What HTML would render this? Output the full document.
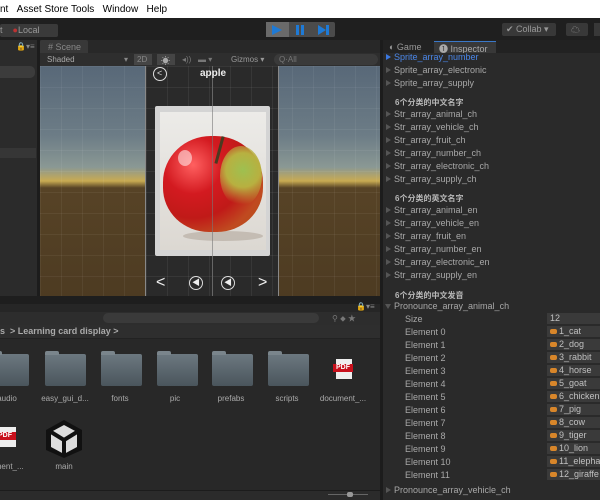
<!DOCTYPE html>
<html><head><meta charset="utf-8"><style>
*{margin:0;padding:0;box-sizing:border-box}
body{width:600px;height:500px;overflow:hidden;background:#282828;font-family:"Liberation Sans","Noto Sans CJK SC",sans-serif;position:relative;color:#bdbdbd}
.a{position:absolute}
.t{position:absolute;font-size:9px;white-space:nowrap}
.menu{left:0;top:0;width:600px;height:18px;background:#fff;color:#000;font-size:10px}
.ins .r{position:absolute;left:394px;font-size:9px;color:#a8a8a8;white-space:nowrap}
.ins .tri{position:absolute;left:386px;width:0;height:0;border-left:5px solid #555;border-top:3px solid transparent;border-bottom:3px solid transparent}
.ins .h{position:absolute;left:395px;font-size:8px;color:#b8b8b8;font-weight:bold}
.el{position:absolute;left:405px;font-size:9px;color:#a8a8a8}
.fld{position:absolute;left:547px;width:53px;height:11px;background:#3a3a3a;font-size:9px;color:#c0c0c0;padding-left:3px;line-height:11px;white-space:nowrap;overflow:hidden}
.fld i{display:inline-block;width:7px;height:5px;background:#d8862a;margin-right:2px;border-radius:2px}
.folder{position:absolute;width:41px;height:32px;background:linear-gradient(#6c7880,#4a555c);border-radius:2px}
.folder:before{content:"";position:absolute;left:0;top:-3px;width:14px;height:4px;background:#7a858c;border-radius:2px 2px 0 0}
.lab{position:absolute;font-size:8px;color:#aaa;text-align:center;width:60px}
</style></head><body>
<div class="a menu"><span class="t" style="left:0;top:4px;font-size:10px">nt&nbsp;&nbsp;&nbsp;Asset Store Tools&nbsp;&nbsp;&nbsp;Window&nbsp;&nbsp;&nbsp;Help</span></div>
<div class="a" style="left:0;top:18px;width:600px;height:22px;background:#1f1f1f"></div>
<div class="a" style="left:0;top:24px;width:58px;height:13px;background:#3a3a3a;border-radius:2px"></div>
<span class="t" style="left:0;top:25px;color:#999">t&nbsp;&nbsp;&nbsp;&nbsp;<span style="color:#b33">●</span>Local</span>
<div class="a" style="left:266px;top:22px;width:69px;height:15px;background:#4b4b4b;border-radius:2px"></div>
<div class="a" style="left:266px;top:22px;width:23px;height:15px;background:#6a6a6a"></div>
<div class="a" style="left:272px;top:25px;border-left:10px solid #1e7ad6;border-top:5px solid transparent;border-bottom:5px solid transparent"></div>
<div class="a" style="left:296px;top:25px;width:3px;height:10px;background:#1e7ad6"></div><div class="a" style="left:301px;top:25px;width:3px;height:10px;background:#1e7ad6"></div>
<div class="a" style="left:318px;top:25px;border-left:8px solid #1e7ad6;border-top:5px solid transparent;border-bottom:5px solid transparent"></div><div class="a" style="left:326px;top:25px;width:3px;height:10px;background:#1e7ad6"></div>
<div class="a" style="left:502px;top:23px;width:54px;height:13px;background:#383838;border-radius:2px"></div>
<span class="t" style="left:506px;top:24px;color:#999">✔ Collab ▾</span>
<div class="a" style="left:566px;top:23px;width:22px;height:13px;background:#383838;border-radius:2px"></div>
<span class="t" style="left:571px;top:23px;color:#999">☁</span>
<div class="a" style="left:594px;top:23px;width:6px;height:13px;background:#383838"></div>
<div class="a" style="left:0;top:40px;width:37px;height:256px;background:#2b2b2b"></div>
<div class="a" style="left:0;top:66px;width:35px;height:12px;background:#3c3c3c;border-radius:0 5px 5px 0"></div>
<div class="a" style="left:0;top:148px;width:36px;height:10px;background:#363636"></div>
<span class="t" style="left:16px;top:42px;color:#888;font-size:8px">🔒▾≡</span>
<div class="a" style="left:37px;top:40px;width:3px;height:256px;background:#1c1c1c"></div>
<div class="a" style="left:40px;top:40px;width:48px;height:13px;background:#383838;border-radius:2px 2px 0 0"></div>
<span class="t" style="left:48px;top:42px;color:#888"># Scene</span>
<div class="a" style="left:40px;top:53px;width:340px;height:13px;background:#2e2e2e"></div>
<span class="t" style="left:47px;top:55px;color:#aaa;font-size:8px">Shaded</span>
<span class="t" style="left:124px;top:55px;color:#888;font-size:8px">▾</span>
<div class="a" style="left:134px;top:54px;width:18px;height:11px;background:#454545"></div><span class="t" style="left:137px;top:55px;color:#888;font-size:8px">2D</span>
<div class="a" style="left:157px;top:54px;width:18px;height:11px;background:#454545"></div><span class="t" style="left:161px;top:54px;color:#aaa">☀</span>
<span class="t" style="left:182px;top:55px;color:#777;font-size:8px">◂))&nbsp;&nbsp;&nbsp;▬ ▾</span>
<span class="t" style="left:231px;top:55px;color:#999;font-size:8px">Gizmos ▾</span>
<div class="a" style="left:274px;top:54px;width:104px;height:11px;background:#3a3a3a;border-radius:6px"></div><span class="t" style="left:279px;top:55px;color:#777;font-size:8px">Q·All</span>
<div class="a" style="left:40px;top:66px;width:340px;height:230px;background:linear-gradient(#586878 0%,#6c7c86 30%,#8a9894 44%,#c8aa52 50%,#574326 53%,#4d3b22 100%)"></div>
<div class="a" style="left:40px;top:66px;width:340px;height:230px;background-image:linear-gradient(90deg,rgba(255,255,255,.05) 1px,transparent 1px),linear-gradient(rgba(255,255,255,.05) 1px,transparent 1px);background-size:21px 21px"></div>
<div class="a" style="left:145px;top:66px;width:134px;height:230px;background:#2a2a2a;border-left:1px solid #888;border-right:1px solid #888;background-image:linear-gradient(90deg,rgba(255,255,255,.06) 1px,transparent 1px),linear-gradient(rgba(255,255,255,.06) 1px,transparent 1px);background-size:21px 21px"></div>
<div class="a" style="left:212px;top:66px;width:1px;height:230px;background:#666"></div>
<div class="a" style="left:153px;top:67px;width:14px;height:14px;border:1.5px solid #ddd;border-radius:50%"></div><span class="t" style="left:157px;top:68px;color:#ddd;font-size:9px">&lt;</span>
<span class="t" style="left:200px;top:68px;color:#eee;font-weight:bold;font-size:10px">apple</span>
<div class="a" style="left:155px;top:106px;width:115px;height:150px;background:#d4d4d4;border-radius:2px"></div>
<div class="a" style="left:160px;top:112px;width:106px;height:138px;background:linear-gradient(#ecebe8,#dcd8d2)"></div>
<div class="a" style="left:183px;top:231px;width:80px;height:10px;background:rgba(120,100,80,.25);border-radius:50%"></div>
<div class="a" style="left:163px;top:136px;width:100px;height:96px;border-radius:48% 48% 46% 46%;background:radial-gradient(circle at 30% 30%,#ff6060 0%,#d31a20 30%,#c01a18 55%,#c04a20 75%,#b05018 100%)"></div>
<div class="a" style="left:220px;top:146px;width:42px;height:60px;border-radius:50%;background:radial-gradient(circle at 55% 40%,#9ec050 0%,#b8b040 40%,rgba(200,120,30,0) 80%)"></div>
<div class="a" style="left:178px;top:150px;width:14px;height:16px;border-radius:50%;background:rgba(255,230,230,.6)"></div>
<div class="a" style="left:218px;top:136px;width:3px;height:28px;background:#4a3a20;transform:rotate(15deg)"></div>
<div class="a" style="left:212px;top:106px;width:1px;height:150px;background:rgba(120,120,120,.6)"></div>
<span class="t" style="left:156px;top:274px;color:#eee;font-size:16px">&lt;</span>
<span class="t" style="left:258px;top:274px;color:#eee;font-size:16px">&gt;</span>
<div class="a" style="left:189px;top:276px;width:14px;height:14px;border:1.5px solid #ddd;border-radius:50%"></div><span class="t" style="left:192px;top:277px;color:#eee;font-size:8px">◀</span>
<div class="a" style="left:221px;top:276px;width:14px;height:14px;border:1.5px solid #ddd;border-radius:50%"></div><span class="t" style="left:224px;top:277px;color:#eee;font-size:8px">◀</span>
<div class="a" style="left:0;top:296px;width:380px;height:8px;background:#1e1e1e"></div>
<div class="a" style="left:0;top:304px;width:380px;height:8px;background:#262626"></div>
<span class="t" style="left:356px;top:302px;color:#888;font-size:8px">🔒▾≡</span>
<div class="a" style="left:0;top:312px;width:380px;height:13px;background:#2d2d2d"></div>
<div class="a" style="left:103px;top:313px;width:216px;height:10px;background:#3a3a3a;border-radius:5px"></div>
<span class="t" style="left:332px;top:313px;color:#777;font-size:8px">⚲ ⬥ ★</span>
<div class="a" style="left:0;top:325px;width:380px;height:14px;background:#2e2e2e;border-bottom:1px solid #222"></div>
<span class="t" style="left:0;top:326px;color:#aaa;font-weight:bold">s&nbsp;&nbsp;&gt;&nbsp;Learning card display&nbsp;&gt;</span>
<div class="a" style="left:0;top:340px;width:380px;height:150px;background:#282828"></div>
<div class="folder" style="left:-12px;top:354px"></div>
<div class="folder" style="left:45px;top:354px"></div>
<div class="folder" style="left:101px;top:354px"></div>
<div class="folder" style="left:157px;top:354px"></div>
<div class="folder" style="left:212px;top:354px"></div>
<div class="folder" style="left:268px;top:354px"></div>
<div class="a" style="left:336px;top:359px;width:16px;height:20px;background:#eee"></div><div class="a" style="left:333px;top:364px;width:20px;height:8px;background:#c8101c;color:#fff;font-size:7px;font-weight:bold;text-align:center;line-height:8px">PDF</div>
<div class="a" style="left:0;top:427px;width:16px;height:20px;background:#eee"></div><div class="a" style="left:-2px;top:432px;width:18px;height:8px;background:#c8101c;color:#fff;font-size:7px;font-weight:bold;line-height:8px">PDF</div>
<svg class="a" style="left:42px;top:418px" width="44" height="42" viewBox="0 0 44 42"><polygon points="22,2 40,12 40,32 22,40 4,32 4,12" fill="#111"/><polygon points="22,7 35,14 35,29 22,36 9,29 9,14" fill="#ddd"/><path d="M22 22 L22 36 M22 22 L9 14 M22 22 L35 14" stroke="#111" stroke-width="4"/></svg>
<div class="lab" style="left:-23px;top:394px">audio</div>
<div class="lab" style="left:35px;top:394px">easy_gui_d...</div>
<div class="lab" style="left:90px;top:394px">fonts</div>
<div class="lab" style="left:145px;top:394px">pic</div>
<div class="lab" style="left:201px;top:394px">prefabs</div>
<div class="lab" style="left:257px;top:394px">scripts</div>
<div class="lab" style="left:313px;top:394px">document_...</div>
<div class="lab" style="left:-23px;top:462px">ument_...</div>
<div class="lab" style="left:34px;top:462px">main</div>
<div class="a" style="left:0;top:490px;width:380px;height:10px;background:#2b2b2b;border-top:1px solid #1c1c1c"></div>
<div class="a" style="left:328px;top:494px;width:40px;height:1px;background:#666"></div><div class="a" style="left:347px;top:492px;width:6px;height:5px;background:#999;border-radius:2px"></div>
<div class="a" style="left:380px;top:40px;width:3px;height:460px;background:#1c1c1c"></div>
<div class="a" style="left:383px;top:40px;width:217px;height:13px;background:#222"></div>
<span class="t" style="left:389px;top:42px;color:#999">◐ Game</span>
<div class="a" style="left:434px;top:41px;width:62px;height:12px;background:#383838;border-top:1px solid #3a78c8"></div>
<span class="t" style="left:439px;top:42px;color:#aaa">❶ Inspector</span>
<div class="ins">
<div class="a" style="left:383px;top:53px;width:217px;height:447px;background:#2a2a2a"></div>
<div class="tri" style="top:54px;border-left-color:#3a78e0"></div><div class="r" style="top:52px;color:#4a86e8">Sprite_array_number</div>
<div class="tri" style="top:67px"></div><div class="r" style="top:65px">Sprite_array_electronic</div>
<div class="tri" style="top:80px"></div><div class="r" style="top:78px">Sprite_array_supply</div>
<div class="h" style="top:97px">6个分类的中文名字</div>
<div class="tri" style="top:111px"></div><div class="r" style="top:109px">Str_array_animal_ch</div>
<div class="tri" style="top:124px"></div><div class="r" style="top:122px">Str_array_vehicle_ch</div>
<div class="tri" style="top:137px"></div><div class="r" style="top:135px">Str_array_fruit_ch</div>
<div class="tri" style="top:150px"></div><div class="r" style="top:148px">Str_array_number_ch</div>
<div class="tri" style="top:163px"></div><div class="r" style="top:161px">Str_array_electronic_ch</div>
<div class="tri" style="top:176px"></div><div class="r" style="top:174px">Str_array_supply_ch</div>
<div class="h" style="top:193px">6个分类的英文名字</div>
<div class="tri" style="top:207px"></div><div class="r" style="top:205px">Str_array_animal_en</div>
<div class="tri" style="top:220px"></div><div class="r" style="top:218px">Str_array_vehicle_en</div>
<div class="tri" style="top:233px"></div><div class="r" style="top:231px">Str_array_fruit_en</div>
<div class="tri" style="top:246px"></div><div class="r" style="top:244px">Str_array_number_en</div>
<div class="tri" style="top:259px"></div><div class="r" style="top:257px">Str_array_electronic_en</div>
<div class="tri" style="top:272px"></div><div class="r" style="top:270px">Str_array_supply_en</div>
<div class="h" style="top:290px">6个分类的中文发音</div>
<div class="a" style="left:385px;top:304px;border-top:5px solid #555;border-left:3px solid transparent;border-right:3px solid transparent"></div><div class="r" style="top:301px">Pronounce_array_animal_ch</div>
<div class="el" style="top:314px">Size</div><div class="fld" style="top:313px">12</div>
<div class="el" style="top:327px">Element 0</div><div class="fld" style="top:326px"><i></i>1_cat</div>
<div class="el" style="top:340px">Element 1</div><div class="fld" style="top:339px"><i></i>2_dog</div>
<div class="el" style="top:353px">Element 2</div><div class="fld" style="top:352px"><i></i>3_rabbit</div>
<div class="el" style="top:366px">Element 3</div><div class="fld" style="top:365px"><i></i>4_horse</div>
<div class="el" style="top:379px">Element 4</div><div class="fld" style="top:378px"><i></i>5_goat</div>
<div class="el" style="top:392px">Element 5</div><div class="fld" style="top:391px"><i></i>6_chicken</div>
<div class="el" style="top:405px">Element 6</div><div class="fld" style="top:404px"><i></i>7_pig</div>
<div class="el" style="top:418px">Element 7</div><div class="fld" style="top:417px"><i></i>8_cow</div>
<div class="el" style="top:431px">Element 8</div><div class="fld" style="top:430px"><i></i>9_tiger</div>
<div class="el" style="top:444px">Element 9</div><div class="fld" style="top:443px"><i></i>10_lion</div>
<div class="el" style="top:457px">Element 10</div><div class="fld" style="top:456px"><i></i>11_elepha</div>
<div class="el" style="top:470px">Element 11</div><div class="fld" style="top:469px"><i></i>12_giraffe</div>
<div class="tri" style="top:487px"></div><div class="r" style="top:485px">Pronounce_array_vehicle_ch</div>
</div>
</body></html>
